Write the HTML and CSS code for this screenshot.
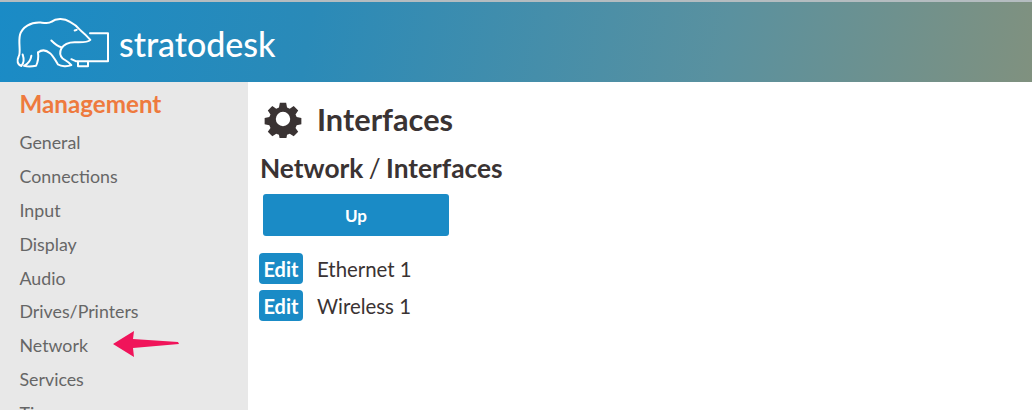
FILE: index.html
```html
<!DOCTYPE html>
<html lang="en">
<head>
<meta charset="utf-8">
<title>Stratodesk Interfaces</title>
<link rel="stylesheet" href="styles.css">
</head>
<body>
<header class="topbar">
  <svg class="bear" viewBox="40 40 300 170" width="100" height="57" fill="none" stroke="#fff" stroke-width="6" stroke-linecap="round" stroke-linejoin="round">
    <path d="M268 100H322V184H225L212 178"/>
    <path d="M232 186V199H262V186"/>
    <path d="M62 198C50 195 48 182 54 170C62 158 52 130 58 105C64 82 90 66 120 68C135 70 145 72 152 66C165 56 190 54 208 66C220 72 232 82 240 92C252 102 262 112 269 120C262 127 240 128 222 127C205 127 190 132 182 146C176 158 178 168 186 176C194 182 205 186 212 196C200 201 182 200 172 194C164 182 158 168 148 160C136 150 122 150 112 158"/>
    <path d="M112 158C114 172 112 186 106 198C94 200 78 200 70 198C82 192 90 182 92 168"/>
    <path d="M62 198C70 190 70 176 66 164"/>
    <path d="M222 92L228 90"/>
    <path d="M182 142C170 140 160 130 152 122"/>
  </svg>
  <span class="brand">stratodesk</span>
</header>
<div class="layout">
  <nav class="sidebar">
    <h2 class="nav-title">Management</h2>
    <a class="nav-item">General</a>
    <a class="nav-item">Connections</a>
    <a class="nav-item">Input</a>
    <a class="nav-item">Display</a>
    <a class="nav-item">Audio</a>
    <a class="nav-item">Drives/Printers</a>
    <a class="nav-item nav-marked">Network
      <svg class="arrow" viewBox="0 0 68 28" width="68" height="28"><path d="M1 14L22 1L21 9L66 12L67 14L21 18L22 27Z" fill="#f0145a"/></svg>
    </a>
    <a class="nav-item">Services</a>
    <a class="nav-item">Time</a>
  </nav>
  <main class="content">
    <h1 class="page-title">
      <svg class="gear" viewBox="0 0 38 38" width="38" height="38">
        <path fill="#3a3333" fill-rule="evenodd" d="M15.5 1h7l1 5.2 3 1.3 4.4-3 5 5-3 4.4 1.3 3 5.2 1v7l-5.2 1-1.3 3 3 4.4-5 5-4.4-3-3 1.3-1 5.2h-7l-1-5.2-3-1.3-4.4 3-5-5 3-4.4-1.3-3-5.2-1v-7l5.2-1 1.3-3-3-4.4 5-5 4.4 3 3-1.3zM19 11a8 8 0 1 0 0 16 8 8 0 0 0 0-16z" transform="translate(1.9 1.9) scale(.9)"/>
      </svg>
      Interfaces
    </h1>
    <h2 class="section-title">Network <span class="slash">/</span> Interfaces</h2>
    <button class="btn-up">Up</button>
    <div class="row"><button class="btn-edit">Edit</button><span>Ethernet 1</span></div>
    <div class="row"><button class="btn-edit">Edit</button><span>Wireless 1</span></div>
  </main>
</div>
</body>
</html>
```
FILE: styles.css
```css
html, body {
  margin: 0;
  height: 100%;
  overflow: hidden;
}
body {
  font-family: Lato, "Open Sans", sans-serif;
  color: #3a3333;
  background: #fff;
}
.topbar {
  box-sizing: border-box;
  height: 82px;
  border-top: 2px solid #b4bcc0;
  background: linear-gradient(100deg, #1a8bc6 0%, #2a8ab8 30%, #5a919f 70%, #80917f 100%);
  display: flex;
  align-items: center;
  padding: 0 0 2px 14px;
  gap: 5px;
}
.brand {
  color: #fff;
  font-size: 34px;
  font-weight: 500;
  line-height: 1;
  margin-top: 6px;
  letter-spacing: -.05px;
}
.layout {
  display: flex;
  height: 328px;
}
.sidebar {
  width: 248px;
  flex: none;
  background: #e8e8e8;
  padding: 8px 0 0 19.5px;
  box-sizing: border-box;
  overflow: hidden;
}
.nav-title {
  margin: 0 0 7px;
  font-size: 24.2px;
  line-height: 28px;
  font-weight: 700;
  color: #ee7a3e;
}
.nav-item {
  display: flex;
  align-items: center;
  height: 33.9px;
  font-size: 17.8px;
  color: #666;
  position: relative;
}
.arrow {
  position: absolute;
  left: 92px;
  top: 2px;
}
.content {
  flex: 1;
  padding: 15px 0 0 12px;
}
.page-title {
  display: flex;
  align-items: center;
  gap: 15px;
  margin: 0 0 0 4px;
  height: 44px;
  font-size: 30.7px;
  font-weight: 700;
}
.section-title {
  margin: 10px 0 9px;
  font-size: 26.3px;
  line-height: 34px;
  font-weight: 700;
  word-spacing: -1px;
}
.slash {
  font-weight: 400;
}
.btn-up {
  display: block;
  width: 186px;
  height: 42px;
  margin: 0 0 17px 3px;
  border: 0;
  border-radius: 3px;
  background: #1a8bc6;
  color: #fff;
  font: 700 17px Lato, sans-serif;
}
.row {
  display: flex;
  align-items: center;
  gap: 14px;
  height: 31px;
  margin-bottom: 6px;
  margin-left: -1px;
  font-size: 20.4px;
}
.btn-edit {
  width: 44px;
  height: 31px;
  padding: 0;
  border: 0;
  border-radius: 4px;
  background: #1a8bc6;
  color: #fff;
  font: 700 20px Lato, sans-serif;
}
```
